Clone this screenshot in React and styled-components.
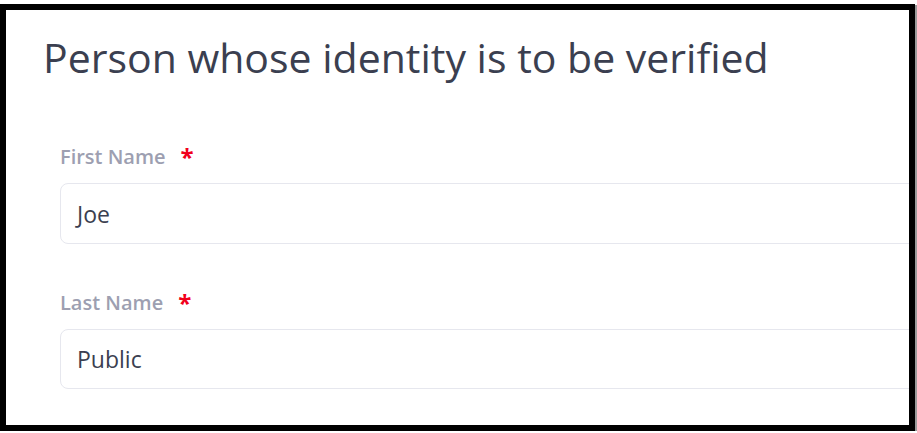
import React from "react";
import styled, { createGlobalStyle } from "styled-components";

const Global = createGlobalStyle`
  html, body { margin: 0; padding: 0; background: #ffffff; }
  body { font-family: "Open Sans", "Noto Sans", sans-serif; }
`;

const Frame = styled.div`
  box-sizing: border-box;
  margin-top: 4px;
  width: 915px;
  height: 427px;
  border: 6px solid #000;
  box-shadow: 2px 1px 0 #9a9a9a;
  background: #fff;
  overflow: hidden;
`;

const Title = styled.h1`
  margin: 0;
  padding: 19px 0 0 37px;
  font-size: 41px;
  font-weight: 400;
  line-height: 56px;
  color: #3b3f50;
  white-space: nowrap;
`;

const Form = styled.div`
  display: flex;
  flex-direction: column;
  gap: 45px;
  padding: 58px 0 0 54px;
`;

const Group = styled.div`
  display: flex;
  flex-direction: column;
  gap: 13px;
`;

const Label = styled.label`
  display: flex;
  align-items: center;
  gap: 15px;
  height: 27px;
  font-size: 20px;
  font-weight: 600;
  line-height: 27px;
  color: #9d9fb1;
`;

const Star = styled.span`
  color: #f1001b;
  font-weight: 700;
  font-size: 24px;
`;

const Input = styled.div`
  box-sizing: border-box;
  width: 900px;
  height: ${(p) => p.$h}px;
  display: flex;
  align-items: center;
  padding-left: 16px;
  border: 1px solid #e6e7ee;
  border-radius: 8px;
  font-size: 23px;
  color: #3b3f50;
`;

export default function App() {
  return (
    <>
      <Global />
      <Frame>
        <Title>Person whose identity is to be verified</Title>
        <Form>
          <Group>
            <Label>
              First Name <Star>*</Star>
            </Label>
            <Input $h={61}>Joe</Input>
          </Group>
          <Group>
            <Label>
              Last Name <Star>*</Star>
            </Label>
            <Input $h={60}>Public</Input>
          </Group>
        </Form>
      </Frame>
    </>
  );
}
